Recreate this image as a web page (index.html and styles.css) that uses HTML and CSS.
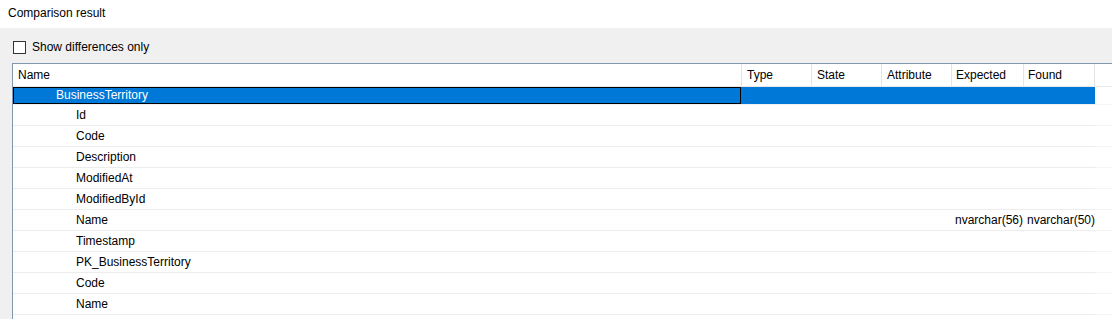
FILE: index.html
```html
<!DOCTYPE html>
<html>
<head>
<meta charset="utf-8">
<link rel="stylesheet" href="styles.css">
</head>
<body>
<div class="title">Comparison result</div>
<div class="panel">
  <label class="check"><span class="box"></span><span>Show differences only</span></label>
  <div class="grid">
    <div class="row head">
      <div class="cells">
        <div class="c name">Name</div>
        <div class="c type">Type</div>
        <div class="c state">State</div>
        <div class="c attr">Attribute</div>
        <div class="c exp">Expected</div>
        <div class="c found">Found</div>
      </div>
      <div class="fill"></div>
    </div>
    <div class="row sel">
      <div class="cells">
        <div class="c name l1">BusinessTerritory</div>
        <div class="c type"></div><div class="c state"></div><div class="c attr"></div><div class="c exp"></div><div class="c found"></div>
      </div>
      <div class="fill"></div>
    </div>
    <div class="row"><div class="cells"><div class="c name l2">Id</div><div class="c type"></div><div class="c state"></div><div class="c attr"></div><div class="c exp"></div><div class="c found"></div></div><div class="fill"></div></div>
    <div class="row"><div class="cells"><div class="c name l2">Code</div><div class="c type"></div><div class="c state"></div><div class="c attr"></div><div class="c exp"></div><div class="c found"></div></div><div class="fill"></div></div>
    <div class="row"><div class="cells"><div class="c name l2">Description</div><div class="c type"></div><div class="c state"></div><div class="c attr"></div><div class="c exp"></div><div class="c found"></div></div><div class="fill"></div></div>
    <div class="row"><div class="cells"><div class="c name l2">ModifiedAt</div><div class="c type"></div><div class="c state"></div><div class="c attr"></div><div class="c exp"></div><div class="c found"></div></div><div class="fill"></div></div>
    <div class="row"><div class="cells"><div class="c name l2">ModifiedById</div><div class="c type"></div><div class="c state"></div><div class="c attr"></div><div class="c exp"></div><div class="c found"></div></div><div class="fill"></div></div>
    <div class="row"><div class="cells"><div class="c name l2">Name</div><div class="c type"></div><div class="c state"></div><div class="c attr"></div><div class="c exp">nvarchar(56)</div><div class="c found">nvarchar(50)</div></div><div class="fill"></div></div>
    <div class="row"><div class="cells"><div class="c name l2">Timestamp</div><div class="c type"></div><div class="c state"></div><div class="c attr"></div><div class="c exp"></div><div class="c found"></div></div><div class="fill"></div></div>
    <div class="row"><div class="cells"><div class="c name l2">PK_BusinessTerritory</div><div class="c type"></div><div class="c state"></div><div class="c attr"></div><div class="c exp"></div><div class="c found"></div></div><div class="fill"></div></div>
    <div class="row"><div class="cells"><div class="c name l2">Code</div><div class="c type"></div><div class="c state"></div><div class="c attr"></div><div class="c exp"></div><div class="c found"></div></div><div class="fill"></div></div>
    <div class="row"><div class="cells"><div class="c name l2">Name</div><div class="c type"></div><div class="c state"></div><div class="c attr"></div><div class="c exp"></div><div class="c found"></div></div><div class="fill"></div></div>
  </div>
</div>
</body>
</html>
```
FILE: styles.css
```css
html, body {
  margin: 0;
  padding: 0;
  height: 319px;
  overflow: hidden;
  background: #f0f0f0;
  font-family: "Liberation Sans", Arial, sans-serif;
  font-size: 12px;
  color: #000;
}
body {
  display: flex;
  flex-direction: column;
}
.title {
  flex: none;
  height: 28px;
  line-height: 26px;
  padding-left: 8px;
  background: #fff;
}
.panel {
  flex: 1;
  min-height: 0;
  display: flex;
  flex-direction: column;
  padding: 12px 0 0 12px;
}
.check {
  flex: none;
  display: flex;
  align-items: center;
  gap: 6px;
  height: 14px;
  margin-left: 1px;
  line-height: 14px;
}
.box {
  width: 11px;
  height: 11px;
  border: 1px solid #333;
  background: #fff;
}
.grid {
  flex: 1;
  min-height: 0;
  overflow: hidden;
  margin-top: 9px;
  border-top: 1px solid #8296ad;
  border-left: 1px solid #8296ad;
  background: #fff;
}
.row {
  display: flex;
  height: 21px;
}
.row .cells {
  display: flex;
  width: 1082px;
  border-bottom: 1px solid #ececec;
}
.row .fill {
  flex: 1;
  border-bottom: 1px solid #f4f4f4;
}
.c {
  box-sizing: border-box;
  line-height: 20px;
  white-space: nowrap;
  overflow: hidden;
  padding-left: 3px;
}
.name { width: 729px; }
.type, .state, .attr { width: 70px; }
.exp { width: 72px; }
.found { width: 71px; }
.head { height: 23px; }
.head .cells { border-bottom: 1px solid #e8e8e8; }
.head .fill { border-bottom: 1px solid #e8e8e8; }
.head .c {
  line-height: 22px;
  border-right: 1px solid #e5e5e5;
  padding-left: 5px;
}
.head .exp, .head .found { padding-left: 4px; }
.sel { height: 18px; }
.sel .cells {
  background: #0078d7;
  border-bottom-color: #f0f0f0;
}
.sel .c {
  color: #fff;
  line-height: 17px;
}
.sel .name {
  border: 1px solid #000;
  line-height: 15px;
  width: 728px;
  margin-right: 1px;
}
.l1.name { padding-left: 42px; }
.l2 { padding-left: 63px; }
.exp, .found { padding-left: 3px; }
```
